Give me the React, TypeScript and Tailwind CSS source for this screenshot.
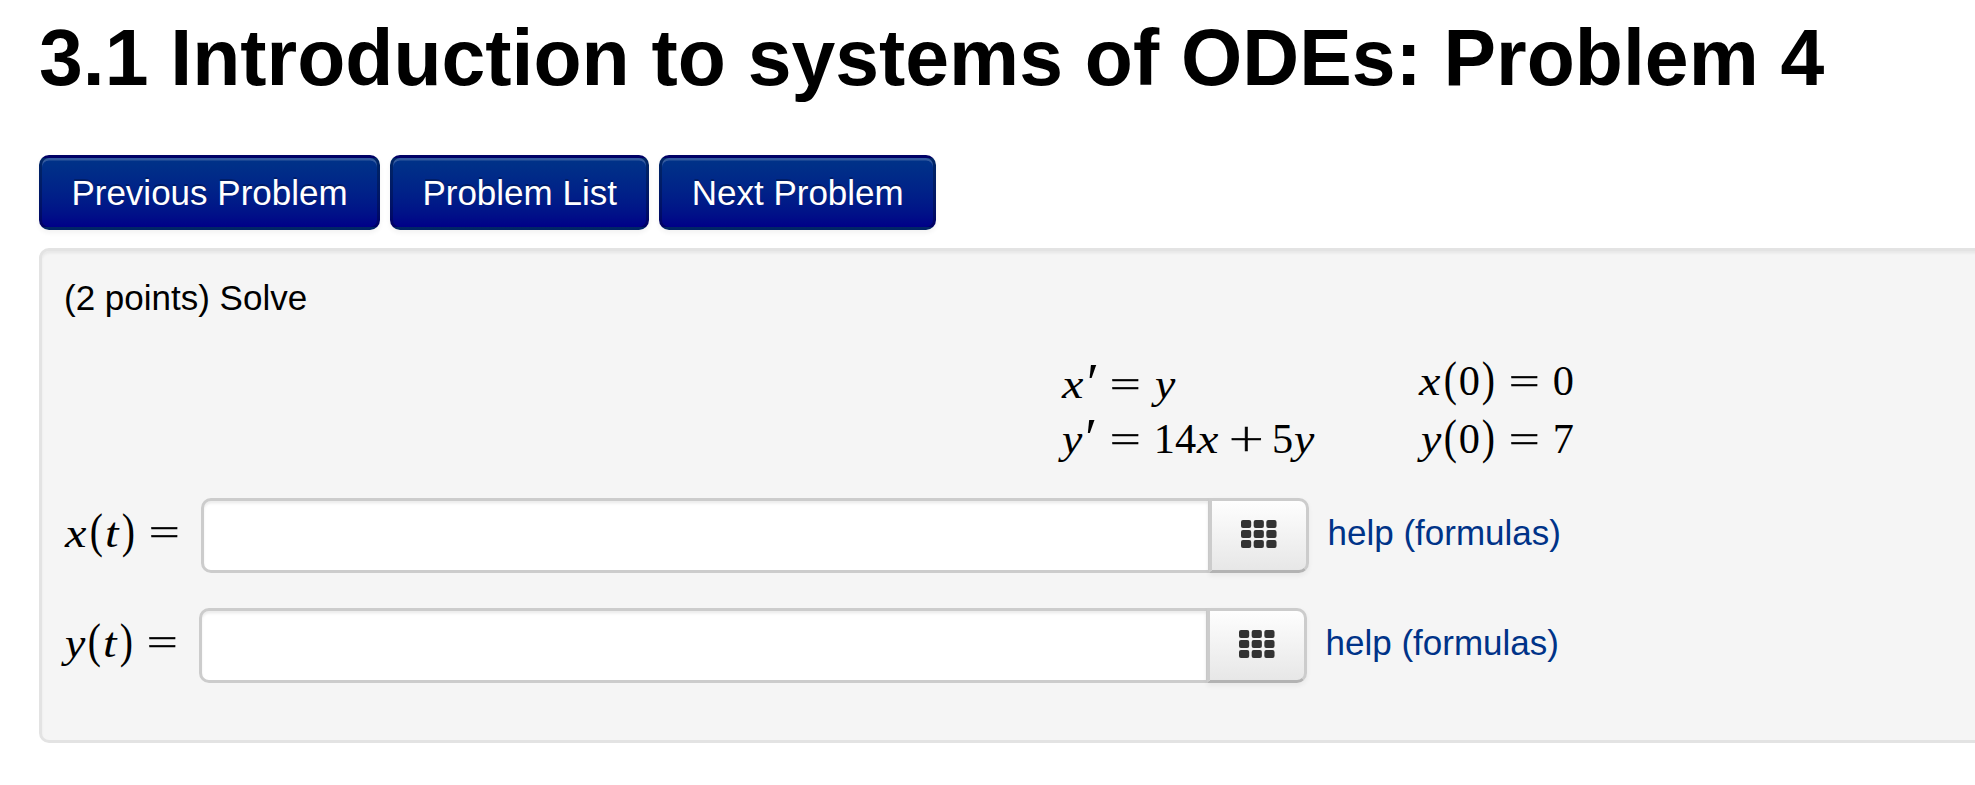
import type { ReactNode } from 'react';
import clsx from 'clsx';

interface TokenProps {
  children: ReactNode;
}

function X() {
  return (
    <span className="inline-block w-[0.572em] pl-[0.02em] text-left">
      <i className="inline-block origin-left scale-x-[1.14]">x</i>
    </span>
  );
}

function Y() {
  return (
    <span className="inline-block w-[0.526em] pl-[0.02em] text-left">
      <i className="inline-block origin-left scale-x-[1.08]">y</i>
    </span>
  );
}

function T() {
  return <i className="inline-block w-[0.361em] origin-left scale-x-[1.15]">t</i>;
}

function Paren({ children }: TokenProps) {
  return (
    <span className="inline-block w-[0.389em] text-center leading-[0]">
      <span className="inline-block scale-x-[0.8] text-[1.17em]">{children}</span>
    </span>
  );
}

function Prime() {
  return (
    <span className="inline-block w-[0.285em] leading-[0]">
      <i className="relative top-[0.06em] -left-[0.03em] inline-block text-[1.3em]">′</i>
    </span>
  );
}

function Operator({ children }: TokenProps) {
  return (
    <span className="inline-block w-[0.778em] text-center font-['Lato'] leading-[0] font-light">
      <span className="relative top-[0.02em] inline-block scale-x-[1.45] scale-y-[1.15] [-webkit-text-stroke:0.4px_black]">
        {children}
      </span>
    </span>
  );
}

function Equals() {
  return (
    <span className="mx-[0.278em]">
      <Operator>=</Operator>
    </span>
  );
}

function NavButton({ label }: { label: string }) {
  return (
    <button className="h-[75px] rounded-[10px] border-3 border-black/25 bg-linear-to-b from-[#003388] to-[#000088] px-[29.4px] text-[35px] leading-[50px] whitespace-nowrap text-white shadow-[inset_0_2.5px_0_rgba(255,255,255,0.2),0_2.5px_5px_rgba(0,0,0,0.05)] text-shadow-[0_-2.5px_0_rgba(0,0,0,0.25)]">
      {label}
    </button>
  );
}

function KeypadIcon() {
  return (
    <svg className="mb-[3px]" width="36" height="28" viewBox="0 0 36 28" fill="#333">
      {[0, 10, 20].map((y) =>
        [0, 12.67, 25.33].map((x) => <rect key={x + '-' + y} x={x} y={y} width="10.2" height="8" rx="2" />),
      )}
    </svg>
  );
}

interface AnswerRowProps {
  label: ReactNode;
  labelClass: string;
}

function AnswerRow({ label, labelClass }: AnswerRowProps) {
  return (
    <div className="flex h-[75px] items-center">
      <div
        className={clsx(
          "shrink-0 pb-1.5 font-['Liberation_Serif',serif] text-[42.35px] leading-[50px] whitespace-nowrap",
          labelClass,
        )}
      >
        {label}
      </div>
      <input
        type="text"
        className="h-[75px] w-[1010px] rounded-l-[10px] border-3 border-[#ccc] bg-white px-4 shadow-[inset_0_2.5px_2.5px_rgba(0,0,0,0.075)] outline-none"
      />
      <button className="-ml-0.5 flex h-[75px] w-[100px] items-center justify-center rounded-r-[10px] border-3 border-[#ccc] border-b-[#b3b3b3] bg-linear-to-b from-white to-[#e6e6e6] bg-origin-border shadow-[inset_0_2.5px_0_rgba(255,255,255,0.2),0_2.5px_5px_rgba(0,0,0,0.05)]">
        <KeypadIcon />
      </button>
      <a href="#" className="ml-[18.5px] pb-1.5 text-[35px] leading-[50px] whitespace-nowrap text-[#003388]">
        help (formulas)
      </a>
    </div>
  );
}

export default function App() {
  return (
    <div className="h-[785px] overflow-hidden bg-white pl-[39px] font-['Liberation_Sans',Arial,sans-serif] text-black">
      <h1 className="h-[155px] pt-2 text-[78.75px] leading-[100px] font-bold whitespace-nowrap">
        3.1 Introduction to systems of ODEs: Problem 4
      </h1>

      <div className="flex gap-2.5">
        <NavButton label="Previous Problem" />
        <NavButton label="Problem List" />
        <NavButton label="Next Problem" />
      </div>

      <div className="mt-[18px] -mr-5 h-[495px] rounded-l-[10px] border-3 border-[#e3e3e3] bg-[#f5f5f5] pt-[22px] pl-[22px] shadow-[inset_0_2.5px_2.5px_rgba(0,0,0,0.05)]">
        <p className="text-[35px] leading-[50px]">(2 points) Solve</p>

        <div className="ml-[997px] flex h-[175px] pt-[29px] font-['Liberation_Serif',serif] text-[42.35px] whitespace-nowrap">
          <div className="w-[331px] pt-1 leading-[55px]">
            <div>
              <X />
              <Prime />
              <Equals />
              <Y />
            </div>
            <div>
              <Y />
              <Prime />
              <span className="ml-[0.046em]">
                <Equals />
              </span>
              14
              <X />
              <span className="mx-[0.222em]">
                <Operator>+</Operator>
              </span>
              5<Y />
            </div>
          </div>
          <div className="w-[182px] text-right leading-[58px]">
            <div>
              <X />
              <Paren>(</Paren>0<Paren>)</Paren>
              <Equals />0
            </div>
            <div>
              <Y />
              <Paren>(</Paren>0<Paren>)</Paren>
              <Equals />7
            </div>
          </div>
        </div>

        <div className="flex flex-col gap-[35px]">
          <AnswerRow
            labelClass="w-[137px]"
            label={
              <>
                <X />
                <Paren>(</Paren>
                <T />
                <Paren>)</Paren>
                <Equals />
              </>
            }
          />
          <AnswerRow
            labelClass="w-[135px]"
            label={
              <>
                <Y />
                <Paren>(</Paren>
                <T />
                <Paren>)</Paren>
                <Equals />
              </>
            }
          />
        </div>
      </div>
    </div>
  );
}
